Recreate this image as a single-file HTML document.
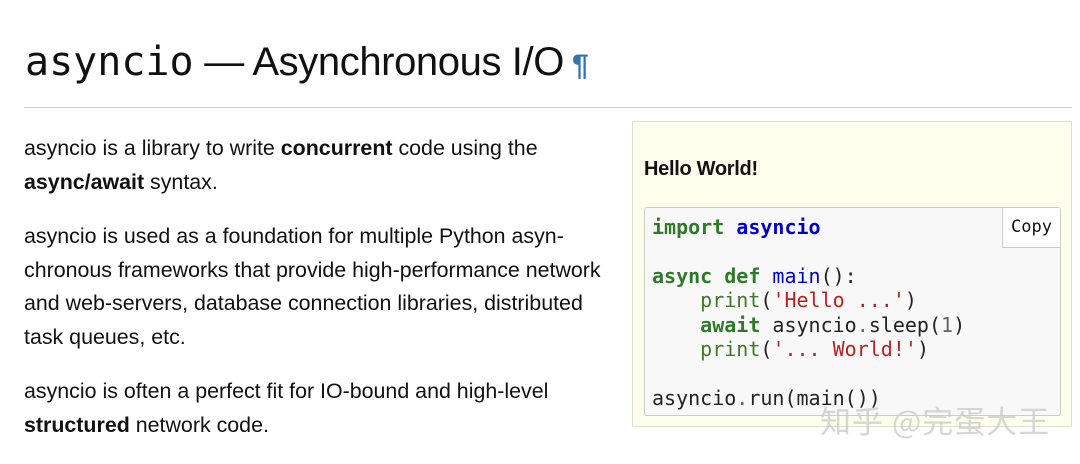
<!DOCTYPE html>
<html><head><meta charset="utf-8"><style>
body{margin:0;width:1080px;height:464px;background:#fff;font-family:"Liberation Sans",sans-serif;color:#111;position:relative;overflow:hidden}
h1{position:absolute;left:25px;top:38px;margin:0;font-size:40px;font-weight:normal;line-height:48px;white-space:nowrap;letter-spacing:-0.4px}
h1 code{font-family:"DejaVu Sans Mono",monospace;letter-spacing:0}
h1 .p{color:#3572b0;font-size:30px;font-weight:bold;margin-left:8px}
.hr{position:absolute;left:24px;top:107px;width:1048px;height:1px;background:#ccc}
.txt{position:absolute;left:24px;top:132px;width:610px;font-size:21.4px;line-height:33.5px;white-space:nowrap}
.txt p{margin:0 0 21px}
.side{position:absolute;left:632px;top:121px;width:438px;height:304px;background:#ffffee;border:1px solid #dde3c8}
.side h3{position:absolute;left:11px;top:35px;margin:0;font-size:20px;line-height:24px;letter-spacing:-0.3px}
.code{position:absolute;left:11px;top:85px;width:415px;height:207px;background:#f8f8f8;border:1px solid #c9d0bb;border-radius:3px}
pre{margin:0;position:absolute;left:7px;top:7px;font-family:"DejaVu Sans Mono",monospace;font-size:20px;line-height:24.4px;color:#222}
.k{color:#2f7a2a;font-weight:bold}.kg{color:#407a28}.n{color:#0000cc;font-weight:bold}.f{color:#0000cc}.s{color:#ba2121}.m{color:#666}
.copy{position:absolute;right:0;top:0;width:57px;height:39px;background:#fff;border-left:1px solid #ccc;border-bottom:1px solid #ccc;font-family:"DejaVu Sans Mono",monospace;font-size:17px;line-height:39px;text-align:center}
.wm{position:absolute;left:820px;top:400px;font-family:"Noto Sans CJK SC",sans-serif;font-size:31px;color:rgba(200,200,200,0.75);line-height:40px;letter-spacing:1px}
</style></head><body>
<h1><code>asyncio</code> — Asynchronous I/O<span class="p">¶</span></h1>
<div class="hr"></div>
<div class="txt">
<p>asyncio is a library to write <b>concurrent</b> code using the<br><b>async/await</b> syntax.</p>
<p>asyncio is used as a foundation for multiple Python asyn-<br>chronous frameworks that provide high-performance network<br>and web-servers, database connection libraries, distributed<br>task queues, etc.</p>
<p>asyncio is often a perfect fit for IO-bound and high-level<br><b>structured</b> network code.</p>
</div>
<div class="side">
<h3>Hello World!</h3>
<div class="code">
<pre><span class="k">import</span> <span class="n">asyncio</span>

<span class="k">async def</span> <span class="f">main</span>():
    <span class="kg">print</span>(<span class="s">'Hello ...'</span>)
    <span class="k">await</span> asyncio<span class="m">.</span>sleep(<span class="m">1</span>)
    <span class="kg">print</span>(<span class="s">'... World!'</span>)

asyncio<span class="m">.</span>run(main())</pre>
<div class="copy">Copy</div>
</div>
</div>
<div class="wm">知乎 @完蛋大王</div>
</body></html>
